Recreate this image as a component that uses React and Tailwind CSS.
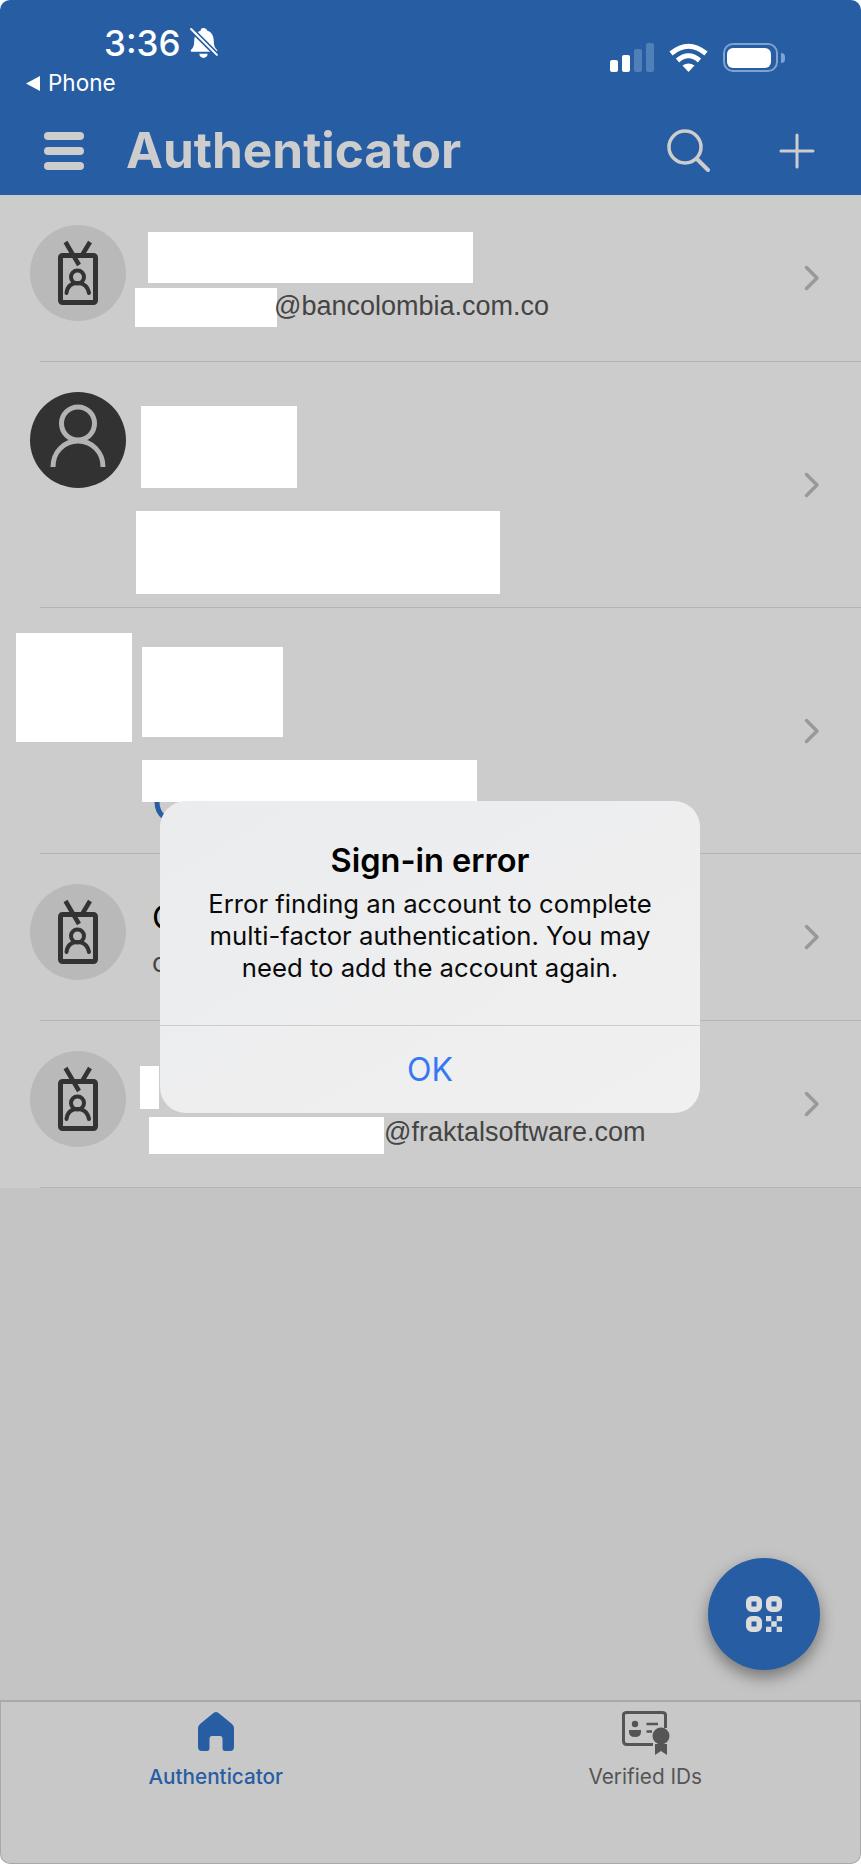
const sans = 'font-["Inter",sans-serif]';

const Redacted = ({ className = '' }) => <div className={`bg-white shrink-0 ${className}`} />;

const Chevron = () => (
  <svg className="ml-auto mr-[41px] self-center shrink-0" width="16" height="26" viewBox="0 0 16 26" fill="none">
    <path d="M2.500 2.500l10.500 10.500L2.500 23.500" stroke="#999" strokeWidth="3.500" strokeLinecap="round" strokeLinejoin="round" />
  </svg>
);

const BadgeAvatar = () => (
  <div className="ml-[30px] mt-[30px] w-[96px] h-[96px] rounded-full bg-[#b9b9b9] shrink-0">
    <svg width="96" height="96" viewBox="0 0 96 96" fill="none" stroke="#333" strokeLinecap="round" strokeLinejoin="round">
      <rect x="30.5" y="30.5" width="35" height="47" rx="2" strokeWidth="5" />
      <path d="M35.500 17L49 40M60 17L51 32" strokeWidth="4.500" strokeLinecap="butt" />
      <circle cx="47.500" cy="52" r="6.500" strokeWidth="4" />
      <path d="M36.500 68C37.500 61 42 58 47.500 58S57.500 61 59 68" strokeWidth="4" />
    </svg>
  </div>
);

const UserAvatar = () => (
  <div className="ml-[30px] mt-[30px] w-[96px] h-[96px] rounded-full bg-[#323232] shrink-0">
    <svg width="96" height="96" viewBox="0 0 96 96" fill="none" stroke="#b3b3b3" strokeWidth="5">
      <circle cx="48" cy="31.500" r="16.500" />
      <path d="M23 75C23 60 34 49 48 49S73 60 73 75" />
    </svg>
  </div>
);

const Separator = () => <div className="ml-[40px] h-px bg-[#b4b4b4]" />;

const StatusIcons = () => (
  <div className="flex items-start mt-[43px] mr-[76px]">
    <div className="flex items-end gap-[4px] h-[29px] mt-0">
      <div className="w-[8px] h-[12px] rounded-[2px] bg-white" />
      <div className="w-[8px] h-[17px] rounded-[2px] bg-white" />
      <div className="w-[8px] h-[23px] rounded-[2px] bg-[#4f80b8]" />
      <div className="w-[8px] h-[29px] rounded-[2px] bg-[#4f80b8]" />
    </div>
    <svg className="ml-[15px]" width="39" height="29" viewBox="0 0 39 29" fill="none" stroke="#fff" strokeWidth="5">
      <path d="M2 10.500Q19.500 -4 37 10.500" />
      <path d="M8.500 17.500Q19.500 8 30.500 17.500" />
      <path d="M13.500 22.500Q19.500 18.500 25.500 22.500L19.500 29Z" fill="#fff" stroke="none" />
    </svg>
    <div className="ml-[15px] w-[55px] h-[29px] rounded-[10px] border-2 border-[#7ea4cf] flex items-center pl-[2px]">
      <div className="w-[44px] h-[20px] rounded-[6px] bg-white" />
    </div>
    <div className="ml-[3px] mt-[10px] w-[4px] h-[10px] rounded-r-full bg-[#7ea4cf]" />
  </div>
);

const Header = () => (
  <header className="h-[195px] shrink-0 bg-[#275da2] rounded-t-[10px] flex flex-col">
    <div className="h-[104px] flex justify-between">
      <div className="pl-[26px]">
        <div className="flex items-center ml-[78px] mt-[24px] h-[38px]">
          <span className={`${sans} text-[35px] font-medium text-white leading-none`}>3:36</span>
          <svg className="ml-[8px]" width="30" height="32" viewBox="0 0 29 31" fill="#fff">
            <path d="M14 1c2 0 3 1 3.500 2.500C22 5 24 9 24 14c0 4 1 6 3 8 1 1 0 2-1 2H3c-1 0-2-1-1-2 2-2 3-4 3-8 0-5 2-9 6.500-10.500C11 2 12 1 14 1z" />
            <path d="M10 26h8c0 2.500-1.800 4-4 4s-4-1.500-4-4z" />
            <path d="M3 3l23 23" stroke="#275da2" strokeWidth="5" />
            <path d="M2 2l25 25" stroke="#fff" strokeWidth="2" strokeLinecap="round" />
          </svg>
        </div>
        <div className="flex items-center mt-[7px]">
          <svg width="14" height="15" viewBox="0 0 14 15" fill="#fff">
            <path d="M14 0v15L0 7.500z" />
          </svg>
          <span className={`${sans} ml-[8px] text-[22.500px] text-white leading-[28px]`}>Phone</span>
        </div>
      </div>
      <StatusIcons />
    </div>
    <div className="flex items-center h-[91px] pt-[3px]">
      <div className="ml-[44px] w-[40px] flex flex-col gap-[7px]">
        <div className="h-[8px] rounded-full bg-[#cdcdcd]" />
        <div className="h-[8px] rounded-full bg-[#cdcdcd]" />
        <div className="h-[8px] rounded-full bg-[#cdcdcd]" />
      </div>
      <h1 className={`${sans} ml-[42px] text-[49.500px] font-bold text-[#cdcdcd] leading-none`}>Authenticator</h1>
      <svg className="ml-auto" width="44" height="44" viewBox="0 0 44 44" fill="none" stroke="#cdcdcd" strokeWidth="3.500" strokeLinecap="round">
        <circle cx="19" cy="18" r="16" />
        <path d="M31 30l11 11" strokeWidth="4" />
      </svg>
      <svg className="ml-[69px] mr-[46px]" width="36" height="36" viewBox="0 0 36 36" fill="none" stroke="#cdcdcd" strokeWidth="3" strokeLinecap="round">
        <path d="M18 2v32M2 18h32" />
      </svg>
    </div>
  </header>
);

const List = () => (
  <div className="bg-[#cccccc] shrink-0">
    <div className="flex h-[166px]">
      <BadgeAvatar />
      <div className="flex flex-col pt-[37px]">
        <Redacted className="ml-[22px] w-[325px] h-[51px]" />
        <div className="flex items-center mt-[5px] ml-[9px]">
          <Redacted className="w-[142px] h-[39px]" />
          <span className='-ml-[3px] mb-[2px] font-["Liberation_Sans",sans-serif] text-[27px] text-[#444] leading-none'>@bancolombia.com.co</span>
        </div>
      </div>
      <Chevron />
    </div>
    <Separator />

    <div className="flex h-[245px]">
      <UserAvatar />
      <div className="flex flex-col pt-[44px]">
        <Redacted className="ml-[15px] w-[156px] h-[82px]" />
        <Redacted className="ml-[10px] mt-[23px] w-[364px] h-[83px]" />
      </div>
      <Chevron />
    </div>
    <Separator />

    <div className="flex h-[245px]">
      <Redacted className="ml-[16px] mt-[25px] w-[116px] h-[109px]" />
      <div className="flex flex-col pt-[39px]">
        <Redacted className="ml-[10px] w-[141px] h-[90px]" />
        <Redacted className="ml-[10px] mt-[23px] w-[335px] h-[42px]" />
        <svg className="ml-[22px]" width="30" height="20" viewBox="0 0 30 20" fill="none">
          <path d="M3 0C3 7 6 12 10 15" stroke="#275da2" strokeWidth="5" />
        </svg>
      </div>
      <Chevron />
    </div>
    <Separator />

    <div className="flex h-[166px]">
      <BadgeAvatar />
      <div className={`${sans} flex flex-col pl-[26px] pt-[46px]`}>
        <span className="text-[33px] leading-[34px] text-black">C</span>
        <span className="mt-[14px] text-[26px] leading-[30px] text-[#444]">c</span>
      </div>
      <Chevron />
    </div>
    <Separator />

    <div className="flex h-[166px]">
      <BadgeAvatar />
      <div className="flex flex-col pt-[45px]">
        <Redacted className="ml-[14px] w-[19px] h-[43px]" />
        <div className="flex items-center mt-[8px] ml-[23px]">
          <Redacted className="w-[235px] h-[37px]" />
          <span className='mb-[6px] font-["Liberation_Sans",sans-serif] text-[27px] text-[#444] leading-none'>@fraktalsoftware.com</span>
        </div>
      </div>
      <Chevron />
    </div>
    <Separator />
  </div>
);

const BottomNav = () => (
  <nav className="h-[164px] shrink-0 bg-[#c8c8c8] border border-[#a9a9a9] border-t-2 rounded-b-[10px] grid grid-cols-2">
    <div className="flex flex-col items-center pt-[10px]">
      <svg width="36" height="39" viewBox="0 0 36 39" fill="#275da2">
        <path d="M15.500 1Q18 -1 20.500 1L34 12Q36 14 36 16V35Q36 39 32 39H27Q24.500 39 24.500 36V27Q24.500 24 22 24H14Q11.500 24 11.500 27V36Q11.500 39 9 39H4Q0 39 0 35V16Q0 14 2 12Z" />
      </svg>
      <span className={`${sans} mt-[12px] text-[20.700px] font-medium leading-[28px] text-[#275da2]`}>Authenticator</span>
    </div>
    <div className="flex flex-col items-center pt-[7px]">
      <svg className="ml-[2px]" width="52" height="48" viewBox="0 0 52 48" fill="none" stroke="#555">
        <path d="M33 35.500H7Q3.500 35.500 3.500 32V6Q3.500 3.500 7 3.500H42Q45.500 3.500 45.500 6V19" strokeWidth="3" />
        <circle cx="15" cy="15" r="3.200" fill="#555" stroke="none" />
        <path d="M9 21H21V23Q21 28 15 28T9 23Z" fill="#555" stroke="none" />
        <path d="M26.500 15H38M26.500 22.500H32" strokeWidth="2.500" />
        <circle cx="41" cy="27" r="8.500" fill="#555" stroke="none" />
        <path d="M35 35V46L41 42L47 46V35Z" fill="#555" stroke="none" />
      </svg>
      <span className={`${sans} mt-[6px] text-[20.800px] leading-[28px] text-[#555]`}>Verified IDs</span>
    </div>
  </nav>
);

const QrFab = () => (
  <div className="absolute left-[708px] top-[1558px] w-[112px] h-[112px] rounded-full bg-[#275da2] shadow-[0_7px_16px_rgba(0,0,0,0.4)] flex items-center justify-center">
    <svg width="36" height="36" viewBox="0 0 36 36" fill="none" stroke="#dcdcdc" strokeWidth="5.500">
      <rect x="2.750" y="2.750" width="10.500" height="10.500" rx="3" />
      <rect x="22.750" y="2.750" width="10.500" height="10.500" rx="3" />
      <rect x="2.750" y="22.750" width="10.500" height="10.500" rx="3" />
      <path d="M20 20h5.300v5.300H20zM30.700 20H36v5.300h-5.300zM25.300 25.300h5.400v5.400h-5.400zM20 30.700h5.300V36H20zM30.700 30.700H36V36h-5.300z" fill="#dcdcdc" stroke="none" />
    </svg>
  </div>
);

const ErrorDialog = () => (
  <div className={`${sans} absolute left-[160px] top-[801px] w-[540px] h-[312px] rounded-[26px] bg-gradient-to-br from-[#ebecee] to-[#f0f0f0] flex flex-col text-center`}>
    <div className="h-[224px] pt-[40px]">
      <h2 className="text-[32.500px] font-semibold leading-[40px] text-black">Sign-in error</h2>
      <p className="mt-[7px] text-[25.700px] leading-[32px] text-[#0a0a0a]">
        Error finding an account to complete<br />
        multi-factor authentication. You may<br />
        need to add the account again.
      </p>
    </div>
    <div className="h-px bg-[#cdcdcd]" />
    <div className="flex-1 flex items-center justify-center text-[32px] leading-none text-[#3478f6]">OK</div>
  </div>
);

export default function App() {
  return (
    <div className="relative w-[861px] h-[1864px] bg-white overflow-hidden flex flex-col">
      <Header />
      <List />
      <div className="flex-1 bg-[#c4c4c4]" />
      <BottomNav />
      <QrFab />
      <ErrorDialog />
    </div>
  );
}
